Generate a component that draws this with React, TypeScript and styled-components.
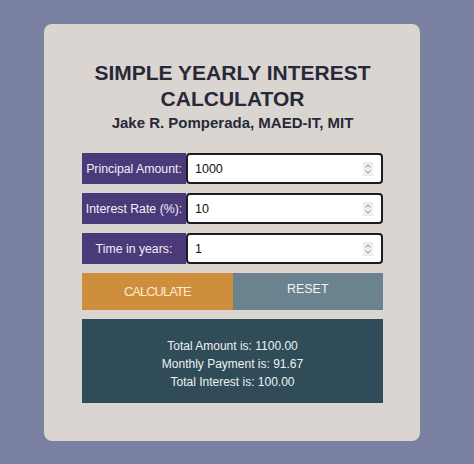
import React, { useState } from 'react'
import styled, { createGlobalStyle } from 'styled-components'

const GlobalStyle = createGlobalStyle`
	html, body {
		margin: 0;
		padding: 0;
		background: #7a81a1;
	}
	body {
		font-family: 'Liberation Sans', Arial, sans-serif;
	}
`

const Page = styled.div`
	width: 474px;
	height: 464px;
	padding: 24px 0 0 44px;
	box-sizing: border-box;
	display: flex;
`

const Card = styled.div`
	width: 376px;
	height: 417px;
	box-sizing: border-box;
	background: #dad5d1;
	border-radius: 8px;
	padding: 36px 37px 0 38px;
	display: flex;
	flex-direction: column;
`

const Title = styled.h1`
	margin: 0;
	font-size: 21px;
	line-height: 26px;
	font-weight: bold;
	color: #272838;
	text-align: center;
`

const Author = styled.h2`
	margin: 2px 0 21px;
	font-size: 15px;
	line-height: 18px;
	font-weight: bold;
	color: #272838;
	text-align: center;
`

const Row = styled.div`
	display: flex;
	height: 31px;
	margin-bottom: 9px;
`

const Label = styled.label`
	width: 104px;
	flex-shrink: 0;
	background: #4b3a79;
	color: #f1eef7;
	font-size: 12.3px;
	display: flex;
	align-items: center;
	justify-content: center;
	white-space: nowrap;
`

const Field = styled.div`
	flex: 1;
	display: flex;
	align-items: center;
	background: #fff;
	border: 2px solid #1c1c22;
	border-radius: 4px;
	padding: 0 8px 0 7px;
`

const Input = styled.input`
	flex: 1;
	min-width: 0;
	border: none;
	outline: none;
	background: transparent;
	font-family: 'Liberation Sans', Arial, sans-serif;
	font-size: 12.5px;
	color: #111;
	padding: 0;
`

const Spinner = styled.svg`
	flex-shrink: 0;
	width: 10px;
	height: 14px;
`

const Buttons = styled.div`
	display: flex;
	height: 37px;
	margin-bottom: 9px;
`

const Btn = styled.button<{ $bg: string; $fg: string; $tight?: boolean; $lift?: number }>`
	flex: 1;
	border: none;
	background: ${(p) => p.$bg};
	color: ${(p) => p.$fg};
	font-family: 'Liberation Sans', Arial, sans-serif;
	font-size: ${(p) => (p.$tight ? '13px' : '12.5px')};
	letter-spacing: ${(p) => (p.$tight ? '-1px' : '0')};
	padding: 0 0 ${(p) => p.$lift || 0}px;
	cursor: pointer;
`

const Result = styled.div`
	height: 84px;
	box-sizing: border-box;
	background: #2f4c58;
	color: #eef2f3;
	font-size: 12px;
	line-height: 18px;
	text-align: center;
	padding-top: 18px;
`

const SpinIcon = () => (
	<Spinner viewBox="0 0 10 14">
		<rect x="0" y="0" width="10" height="14" fill="#eeeeee" />
		<path d="M2.5 5.5 L5 3 L7.5 5.5" fill="none" stroke="#8a8a8a" strokeWidth="1" />
		<path d="M2.5 8.5 L5 11 L7.5 8.5" fill="none" stroke="#8a8a8a" strokeWidth="1" />
	</Spinner>
)

export default function App() {
	const [principal, setPrincipal] = useState('1000')
	const [rate, setRate] = useState('10')
	const [years, setYears] = useState('1')
	const [result, setResult] = useState({ total: 1100, monthly: 91.67, interest: 100 })

	function calculate() {
		const p = parseFloat(principal) || 0
		const r = parseFloat(rate) || 0
		const t = parseFloat(years) || 0
		const interest = p * (r / 100) * t
		const total = p + interest
		const monthly = t > 0 ? total / (t * 12) : 0
		setResult({ total, monthly, interest })
	}

	function reset() {
		setPrincipal('')
		setRate('')
		setYears('')
		setResult({ total: 0, monthly: 0, interest: 0 })
	}

	const fields = [
		{ label: 'Principal Amount:', value: principal, set: setPrincipal },
		{ label: 'Interest Rate (%):', value: rate, set: setRate },
		{ label: 'Time in years:', value: years, set: setYears },
	]

	return (
		<Page>
			<GlobalStyle />
			<Card>
				<Title>
					SIMPLE YEARLY INTEREST
					<br />
					CALCULATOR
				</Title>
				<Author>Jake R. Pomperada, MAED-IT, MIT</Author>
				{fields.map((f) => (
					<Row key={f.label}>
						<Label>{f.label}</Label>
						<Field>
							<Input value={f.value} onChange={(e) => f.set(e.target.value)} />
							<SpinIcon />
						</Field>
					</Row>
				))}
				<Buttons>
					<Btn $bg="#cf8e3b" $fg="#fbebcf" $tight onClick={calculate}>
						CALCULATE
					</Btn>
					<Btn $bg="#6b838e" $fg="#f2f4f5" $lift={5} onClick={reset}>
						RESET
					</Btn>
				</Buttons>
				<Result>
					<div>Total Amount is: {result.total.toFixed(2)}</div>
					<div>Monthly Payment is: {result.monthly.toFixed(2)}</div>
					<div>Total Interest is: {result.interest.toFixed(2)}</div>
				</Result>
			</Card>
		</Page>
	)
}
